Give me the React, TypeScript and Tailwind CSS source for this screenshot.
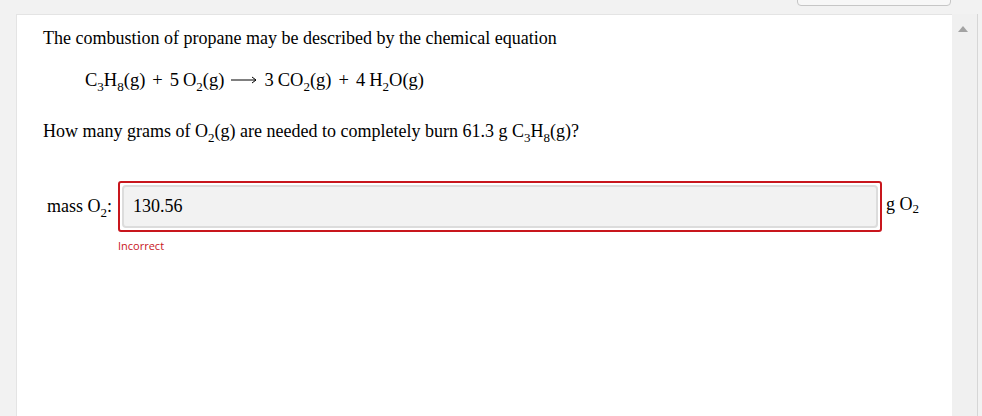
import React from "react";

function Sub({ children }: { children: React.ReactNode }) {
  return <span className="align-[-5px] text-[13px] leading-none">{children}</span>;
}

function Op({ children }: { children: React.ReactNode }) {
  return <span className="mx-[7px]">{children}</span>;
}

function LongArrow() {
  return (
    <svg className="mx-[7px] inline-block align-[1px]" width="26" height="10" viewBox="0 0 26 10" fill="none" stroke="#000" strokeWidth="1">
      <path d="M0 5h25" />
      <path d="M21 2l4 3-4 3" />
    </svg>
  );
}

export default function App() {
  return (
    <div className="relative flex h-[416px] w-[982px] overflow-hidden bg-[#f2f2f2] font-['Liberation_Serif',serif] text-[#000]">
      <div className="absolute left-[797px] top-[-4px] h-[10px] w-[154px] rounded-b-[4px] border border-[#c6c6c6] bg-[#f7f7f7]" />

      <div className="flex flex-1 pl-[16px] pt-[14px]">
        <main className="w-[936px] border-l border-t border-[#e4e4e4] bg-white pl-[26px] pt-[11px]">
          <p className="text-[18px] leading-[24px]">The combustion of propane may be described by the chemical equation</p>

          <div className="mt-[18px] pl-[42px] text-[18.5px] leading-[24px]">
            C<Sub>3</Sub>H<Sub>8</Sub>(g)
            <Op>+</Op>5<span className="ml-[4px]">O</span>
            <Sub>2</Sub>(g)
            <LongArrow />
            3<span className="ml-[4px]">CO</span>
            <Sub>2</Sub>(g)
            <Op>+</Op>4<span className="ml-[4px]">H</span>
            <Sub>2</Sub>O(g)
          </div>

          <p className="mt-[26px] text-[18px] leading-[24px]">
            How many grams of O<Sub>2</Sub>(g) are needed to completely burn 61.3 g C<Sub>3</Sub>H<Sub>8</Sub>(g)?
          </p>

          <div className="mt-[37px] flex items-center">
            <label className="w-[75px] shrink-0 pl-[4px] text-[18px] leading-[24px]">
              mass O<Sub>2</Sub>:
            </label>
            <div className="w-[764px] rounded-[3px] border-2 border-[#c8161d] p-[2px]">
              <div className="flex h-[43px] items-center rounded-[4px] border-2 border-[#dcdcdc] bg-[#f2f2f2] pl-[9px] text-[18px]">
                130.56
              </div>
            </div>
            <span className="ml-[4px] text-[18px] leading-[24px]">
              g O<span className="align-[-3px] text-[13px]">2</span>
            </span>
          </div>
          <p className="ml-[75px] mt-[6px] font-['Open_Sans',sans-serif] text-[11px] leading-[16px] text-[#c8161d]">Incorrect</p>
        </main>

        <aside className="flex w-[26px] border-r border-[#d6d6d6] bg-[#f0f0f0] pl-[6px] pt-[12px]">
          <div className="h-0 w-0 border-x-[5px] border-b-[6px] border-x-transparent border-b-[#a3a3a3]" />
        </aside>
      </div>
    </div>
  );
}
